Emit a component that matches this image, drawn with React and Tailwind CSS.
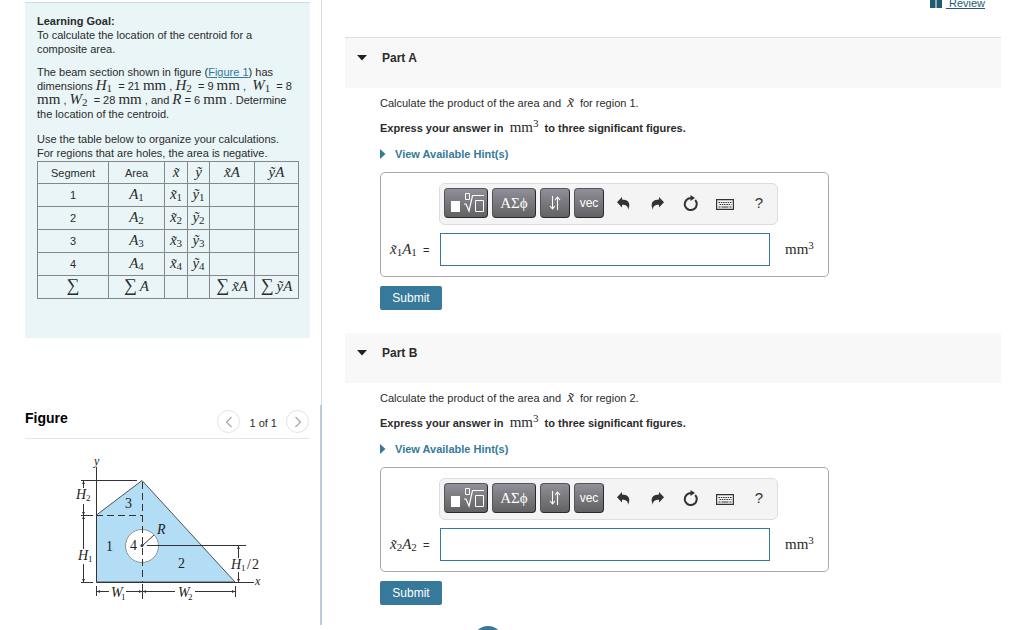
import { useState } from "react";

// Math helpers, rendered as plain text in a serif face
function V({ children, sub }) {
  return (
    <span className="font-['Liberation_Serif',serif] text-[15px] leading-0">
      <i>{children}</i>
      {sub && <span className="relative top-[2px] text-[11px]">{sub}</span>}
    </span>
  );
}

function Mm({ cubed }) {
  return (
    <span className="font-['Liberation_Serif',serif] text-[15px] leading-0 font-normal">
      mm
      {cubed && <span className="relative -top-[5px] text-[11px]">3</span>}
    </span>
  );
}

const Sum = () => <span className="font-['Liberation_Serif',serif] text-[18px] leading-0">∑</span>;

const segments = ["1", "2", "3", "4"];

function SegmentTable() {
  const cell = "border border-[#85878c] p-0 font-normal";
  return (
    <table className="mt-px w-[262px] table-fixed border-collapse text-center">
      <colgroup>
        <col className="w-[71px]" />
        <col className="w-[56px]" />
        <col className="w-[23px]" />
        <col className="w-[22px]" />
        <col className="w-[45px]" />
        <col className="w-[44px]" />
      </colgroup>
      <thead>
        <tr className="h-[22px]">
          <th className={cell}>Segment</th>
          <th className={cell}>Area</th>
          <th className={cell}><V>x̃</V></th>
          <th className={cell}><V>ỹ</V></th>
          <th className={cell}><V>x̃A</V></th>
          <th className={cell}><V>ỹA</V></th>
        </tr>
      </thead>
      <tbody>
        {segments.map((n) => (
          <tr key={n} className="h-[23px]">
            <td className={cell}>{n}</td>
            <td className={cell}><V sub={n}>A</V></td>
            <td className={cell}><V sub={n}>x̃</V></td>
            <td className={cell}><V sub={n}>ỹ</V></td>
            <td className={cell} />
            <td className={cell} />
          </tr>
        ))}
        <tr className="h-[23px] whitespace-nowrap">
          <td className={cell}><Sum /></td>
          <td className={cell}><Sum /> <V>A</V></td>
          <td className={cell} />
          <td className={cell} />
          <td className={cell}><Sum /> <V>x̃A</V></td>
          <td className={cell}><Sum /> <V>ỹA</V></td>
        </tr>
      </tbody>
    </table>
  );
}

function LearningGoal() {
  return (
    <div className="border-t border-[#d3dcdd] bg-[#e9f5f7] px-3 pt-[11px] pb-[39px]">
      <p>
        <b>Learning Goal:</b>
        <br />
        To calculate the location of the centroid for a composite area.
      </p>
      <p className="mt-[9px]">
        The beam section shown in figure (
        <a href="#figure" className="text-[#36799a] underline">Figure 1</a>) has
        <br />
        dimensions <V sub="1">H</V>&nbsp; = 21 <Mm /> , <V sub="2">H</V>&nbsp; = 9 <Mm /> , &nbsp;<V sub="1">W</V>&nbsp; = 8
        <br />
        <Mm /> , <V sub="2">W</V>&nbsp; = 28 <Mm /> , and&nbsp;<V>R</V> = 6 <Mm /> . Determine
        <br />
        the location of the centroid.
      </p>
      <p className="mt-[11px]">
        Use the table below to organize your calculations.
        <br />
        For regions that are holes, the area is negative.
      </p>
      <SegmentTable />
    </div>
  );
}

function BeamDiagram() {
  return (
    <svg
      className="mt-[11px] ml-[35px] font-['Liberation_Serif',serif]"
      width="220"
      height="160"
      viewBox="0 0 220 160"
      fontSize="14"
      fill="#222"
      role="img"
      aria-label="Beam section"
    >
      <path d="M36.5 132V65L82 30.5L175 132Z" fill="#b3dcf5" stroke="#4a5358" />
      <circle cx="82" cy="96" r="16.5" fill="#fff" stroke="#8a979e" />
      <g fill="none" stroke="#333" strokeWidth="1">
        <path d="M36.5 17V132.500H194" />
        <path d="M21 30.500H77M21 65.500H33M21 132.500H33" />
        <path d="M23.500 31V38M23.500 54V99M23.500 114V132" />
        <path d="M36 65.500H82" strokeDasharray="7 4" />
        <path d="M82.500 32V132" strokeDasharray="7 4" />
        <path d="M87 95.500H186M82 96L94 85" />
        <path d="M178.500 96V108M178.500 122V132" />
        <path d="M36.500 136V146M82.500 134V149M175.500 136V147" />
        <path d="M37 141.500H49M66 141.500H115M135 141.500H175" />
      </g>
      <g fill="#333">
        <path d="M23.500 31l-1.500 3h3zM23.500 65l-1.500-3h3zM23.500 66l-1.500 3h3zM23.500 132l-1.500-3h3z" />
        <path d="M178.500 96l-1.500 3h3zM178.500 132l-1.500-3h3z" />
        <path d="M37 141.500l3-1.500v3zM82 141.500l-3-1.500v3zM83 141.500l3-1.500v3zM175 141.500l-3-1.500v3z" />
        <circle cx="82" cy="95.500" r="1.500" />
      </g>
      <g fontStyle="italic">
        <text x="34" y="15" fontSize="12">y</text>
        <text x="195" y="135" fontSize="12">x</text>
        <text x="97" y="84">R</text>
        <text x="16" y="49">H</text>
        <text x="18" y="110">H</text>
        <text x="171" y="119">H</text>
        <text x="51" y="147">W</text>
        <text x="118" y="147">W</text>
      </g>
      <g fontSize="9">
        <text x="26" y="51">2</text>
        <text x="28" y="112">1</text>
        <text x="181" y="121">1</text>
        <text x="61" y="150">1</text>
        <text x="128" y="150">2</text>
      </g>
      <text x="187" y="119">/</text>
      <text x="192" y="119">2</text>
      <text x="46" y="101">1</text>
      <text x="118" y="118">2</text>
      <text x="65" y="58">3</text>
      <text x="70" y="100">4</text>
    </svg>
  );
}

function PagerButton({ label, d }) {
  return (
    <button aria-label={label} className="flex size-[23px] items-center justify-center rounded-full border border-[#e2e2e2]">
      <svg width="10" height="12" viewBox="0 0 10 12" fill="none" stroke="#aaa" strokeWidth="1.3">
        <path d={d} />
      </svg>
    </button>
  );
}

function FigurePanel() {
  return (
    <div id="figure">
      <div className="flex h-[34px] items-start justify-between border-b border-[#e6e6e6]">
        <h2 className="mt-1 text-[14px] leading-[18px] font-bold text-black">Figure</h2>
        <div className="mt-[5px] flex items-center gap-[9px]">
          <PagerButton label="Previous figure" d="M7.500 1L2.500 6l5 5" />
          <span className="pt-[3px]">1 of 1</span>
          <PagerButton label="Next figure" d="M2.500 1L7.500 6l-5 5" />
        </div>
      </div>
      <BeamDiagram />
    </div>
  );
}

const keyStyle =
  "flex h-[30px] items-center justify-center rounded-[4px] border border-[#55555a] border-r-[#29292b] border-b-[#29292b] bg-linear-to-b from-[#918f98] to-[#626264] text-white";
const toolStyle = "flex h-[30px] w-[34px] items-center justify-center text-[#333]";

function CurvedArrow({ flip }) {
  return (
    <svg className={flip ? "-scale-x-100" : ""} width="13" height="13" viewBox="0 0 13 13" fill="currentColor">
      <path d="M5 0v2.500C10 2.600 13 5 12.200 9.500L11 13C11.200 9.500 9.500 7.800 5 7.800V10.500L0 5.200z" />
    </svg>
  );
}

function Toolbar() {
  return (
    <div className="flex h-[42px] w-[339px] items-center rounded-[6px] border border-[#ddd] bg-[#f4f4f4] pb-[2px] pl-1">
      <div className="flex gap-[4px]">
        <button className={`${keyStyle} w-[44px]`} aria-label="Templates">
          <svg width="36" height="22" viewBox="0 0 36 22" fill="none" stroke="#fff">
            <path d="M3 9h9v11H3z" fill="#fff" stroke="none" />
            <path d="M17.500 1.500h4v6h-4z" />
            <path d="M16 12h2l3 7L24.500 3.500H36" strokeWidth="1.200" />
            <path d="M27.500 8.500h8v11h-8z" />
          </svg>
        </button>
        <button className={`${keyStyle} w-[44px] font-['Liberation_Serif',serif] text-[15px]`}>ΑΣϕ</button>
        <button className={`${keyStyle} w-[30px]`} aria-label="Sub and superscript">
          <svg width="12" height="16" viewBox="0 0 12 16" fill="none" stroke="#fff" strokeWidth="1.100">
            <path d="M3.500 1V14M1 11l2.500 3L6 11M8.500 15V2M6 5l2.500-3L11 5" />
          </svg>
        </button>
        <button className={`${keyStyle} w-[30px] text-[12px]`}>vec</button>
      </div>
      <div className="ml-[2px] flex">
        <button className={toolStyle} aria-label="Undo"><CurvedArrow /></button>
        <button className={toolStyle} aria-label="Redo"><CurvedArrow flip /></button>
        <button className={toolStyle} aria-label="Reset">
          <svg width="16" height="17" viewBox="0 0 16 17" fill="none" stroke="currentColor" strokeWidth="2">
            <path d="M12.200 5A6 6 0 1 1 5.500 3.500L8.500 3" />
            <path d="M7.500 0L12 3L7.500 6z" fill="currentColor" stroke="none" />
          </svg>
        </button>
        <button className={toolStyle} aria-label="Keyboard shortcuts">
          <svg className="mt-[3px]" width="18" height="11" viewBox="0 0 18 11" fill="none" stroke="currentColor">
            <path d="M.500.500h17v10H.500z" strokeWidth="1.400" />
            <path d="M2.500 3.500h13M3.500 5.500h12" strokeDasharray="1.500 .800" />
            <path d="M2.500 8h2M5.500 8h7M13.500 8h2" />
          </svg>
        </button>
        <button className={`${toolStyle} text-[15px]`} aria-label="Help">?</button>
      </div>
    </div>
  );
}

function Part({ name, n, first }) {
  const [answer, setAnswer] = useState("");
  const id = `answer-${n}`;
  return (
    <section className={first ? "" : "mt-[23px]"}>
      <header className={`flex gap-[15px] bg-[#f8f8f8] pt-[13px] pl-3 ${first ? "h-[51px] border-t border-[#ddd]" : "h-[50px]"}`}>
        <svg className="mt-1" width="10" height="6" viewBox="0 0 10 6">
          <path d="M0 0h10L5 5.500z" fill="#222" />
        </svg>
        <h3 className="text-[12px] font-bold">{name}</h3>
      </header>
      <div className="pt-2 pl-[35px]">
        <p>
          Calculate the product of the area and&nbsp; <V>x̃</V>&nbsp; for region {n}.
        </p>
        <p className="mt-[11px] font-bold">
          Express your answer in&nbsp; <Mm cubed />&nbsp; to three significant figures.
        </p>
        <button className="mt-3 flex items-center gap-[9px] font-bold text-[#36799a]">
          <svg width="6" height="10" viewBox="0 0 6 10">
            <path d="M0 0L5.500 5L0 10z" fill="currentColor" />
          </svg>
          View Available Hint(s)
        </button>
        <form onSubmit={(e) => e.preventDefault()}>
          <div className="mt-[11px] max-w-[449px] rounded-[5px] border border-[#aaa] pt-[10px] pb-[10px]">
            <div className="pl-[58px]">
              <Toolbar />
            </div>
            <div className="mt-2 flex items-center">
              <label htmlFor={id} className="w-[59px] pl-[9px] whitespace-nowrap">
                <V sub={n}>x̃</V>
                <V sub={n}>A</V>&nbsp; =
              </label>
              <input
                id={id}
                type="text"
                value={answer}
                onChange={(e) => setAnswer(e.target.value)}
                className="h-[33px] w-[330px] border border-[#36799a] bg-white px-2 text-[14px] outline-none"
              />
              <span className="ml-[15px]"><Mm cubed /></span>
            </div>
          </div>
          <button type="submit" className="mt-[9px] block h-6 w-[62px] rounded-[2px] bg-[#36799a] text-[12px] text-white">
            Submit
          </button>
        </form>
      </div>
    </section>
  );
}

export default function App() {
  return (
    <div className="flex items-start bg-white font-['Liberation_Sans',Arial,sans-serif] text-[11px] leading-[14px] text-[#2b2b2b]">
      <aside className="w-[322px] shrink-0">
        <div className="border-r border-[#d3dce6] pt-[2px] pr-[11px] pb-[67px] pl-[25px]">
          <LearningGoal />
        </div>
        <div className="border-r-2 border-[#bccadb] pr-[11px] pb-[15px] pl-[25px]">
          <FigurePanel />
        </div>
      </aside>
      <main className="min-w-0 flex-1 pr-[23px] pl-[23px]">
        <div className="flex h-[37px] justify-end overflow-hidden pr-4">
          <a href="#review" className="-mt-1 flex h-[14px] items-center gap-1 text-[#1f5a73]">
            <svg width="12" height="10" viewBox="0 0 12 10" fill="currentColor">
              <path d="M0 0h5.500v10H0zM6.500 0H12v10H6.500z" />
            </svg>
            <span className="underline">&nbsp;Review</span>
          </a>
        </div>
        <Part name="Part A" n="1" first />
        <Part name="Part B" n="2" />
        <div className="mt-[21px] ml-[128px] h-1 overflow-hidden">
          <div className="size-[30px] rounded-full bg-[#36799a]" />
        </div>
      </main>
    </div>
  );
}
